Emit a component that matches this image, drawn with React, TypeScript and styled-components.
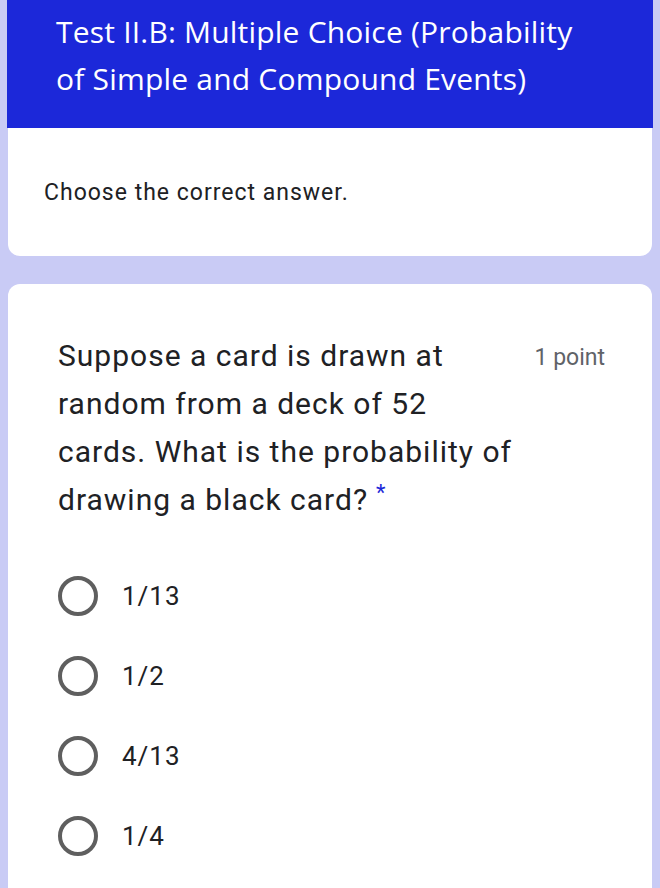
import React from 'react'
import styled, { createGlobalStyle } from 'styled-components'

const GlobalStyle = createGlobalStyle`
  html, body {
    margin: 0;
    padding: 0;
    background-color: #c9cbf5;
    font-family: Roboto, 'Noto Sans', Arial, sans-serif;
  }
`

const Page = styled.div`
  display: flex;
  flex-direction: column;
  padding: 0 8px;
  min-height: 888px;
  overflow: hidden;
`

const Header = styled.div`
  background-color: #1c28d9;
  color: #ffffff;
  margin: 0 -1px;
  padding: 8px 57px 26px 49px;
  font-size: 30px;
  line-height: 47px;
  font-family: 'Open Sans', Roboto, sans-serif;
  letter-spacing: 0.2px;
`

const IntroCard = styled.div`
  background: #ffffff;
  border-radius: 0 0 12px 12px;
  height: 128px;
  display: flex;
  align-items: center;
  padding: 0 36px;
  box-sizing: border-box;
  font-size: 23px;
  color: #202124;
  letter-spacing: 1px;
`

const QuestionCard = styled.div`
  background: #ffffff;
  border-radius: 12px;
  margin-top: 28px;
  padding: 48px 47px 40px 50px;
  flex: 1;
`

const QuestionRow = styled.div`
  display: flex;
  justify-content: space-between;
  align-items: flex-start;
`

const QuestionText = styled.div`
  width: 458px;
  font-size: 30px;
  line-height: 48px;
  letter-spacing: 1px;
  color: #202124;
`

const Required = styled.span`
  color: #1c28d9;
  font-size: 22px;
  line-height: 1;
  vertical-align: 10px;
  margin-left: 8px;
`

const Points = styled.div`
  font-size: 23px;
  color: #5f6368;
  padding-top: 12px;
`

const Options = styled.div`
  display: flex;
  flex-direction: column;
  margin-top: 32px;
`

const Option = styled.label`
  display: flex;
  align-items: center;
  height: 80px;
  gap: 24px;
  font-size: 26px;
  letter-spacing: 1px;
  color: #202124;
`

const Radio = styled.span`
  width: 40px;
  height: 40px;
  border: 4px solid #5f5f5f;
  border-radius: 50%;
  box-sizing: border-box;
  flex-shrink: 0;
`

const choices = ['1/13', '1/2', '4/13', '1/4']

export default function App() {
  return (
    <>
      <GlobalStyle />
      <Page>
        <Header>
          Test II.B: Multiple Choice (Probability of Simple and Compound Events)
        </Header>
        <IntroCard>Choose the correct answer.</IntroCard>
        <QuestionCard>
          <QuestionRow>
            <QuestionText>
              Suppose a card is drawn at random from a deck of 52 cards. What is
              the probability of drawing a black card?
              <Required>*</Required>
            </QuestionText>
            <Points>1 point</Points>
          </QuestionRow>
          <Options>
            {choices.map((c) => (
              <Option key={c}>
                <Radio />
                {c}
              </Option>
            ))}
          </Options>
        </QuestionCard>
      </Page>
    </>
  )
}
